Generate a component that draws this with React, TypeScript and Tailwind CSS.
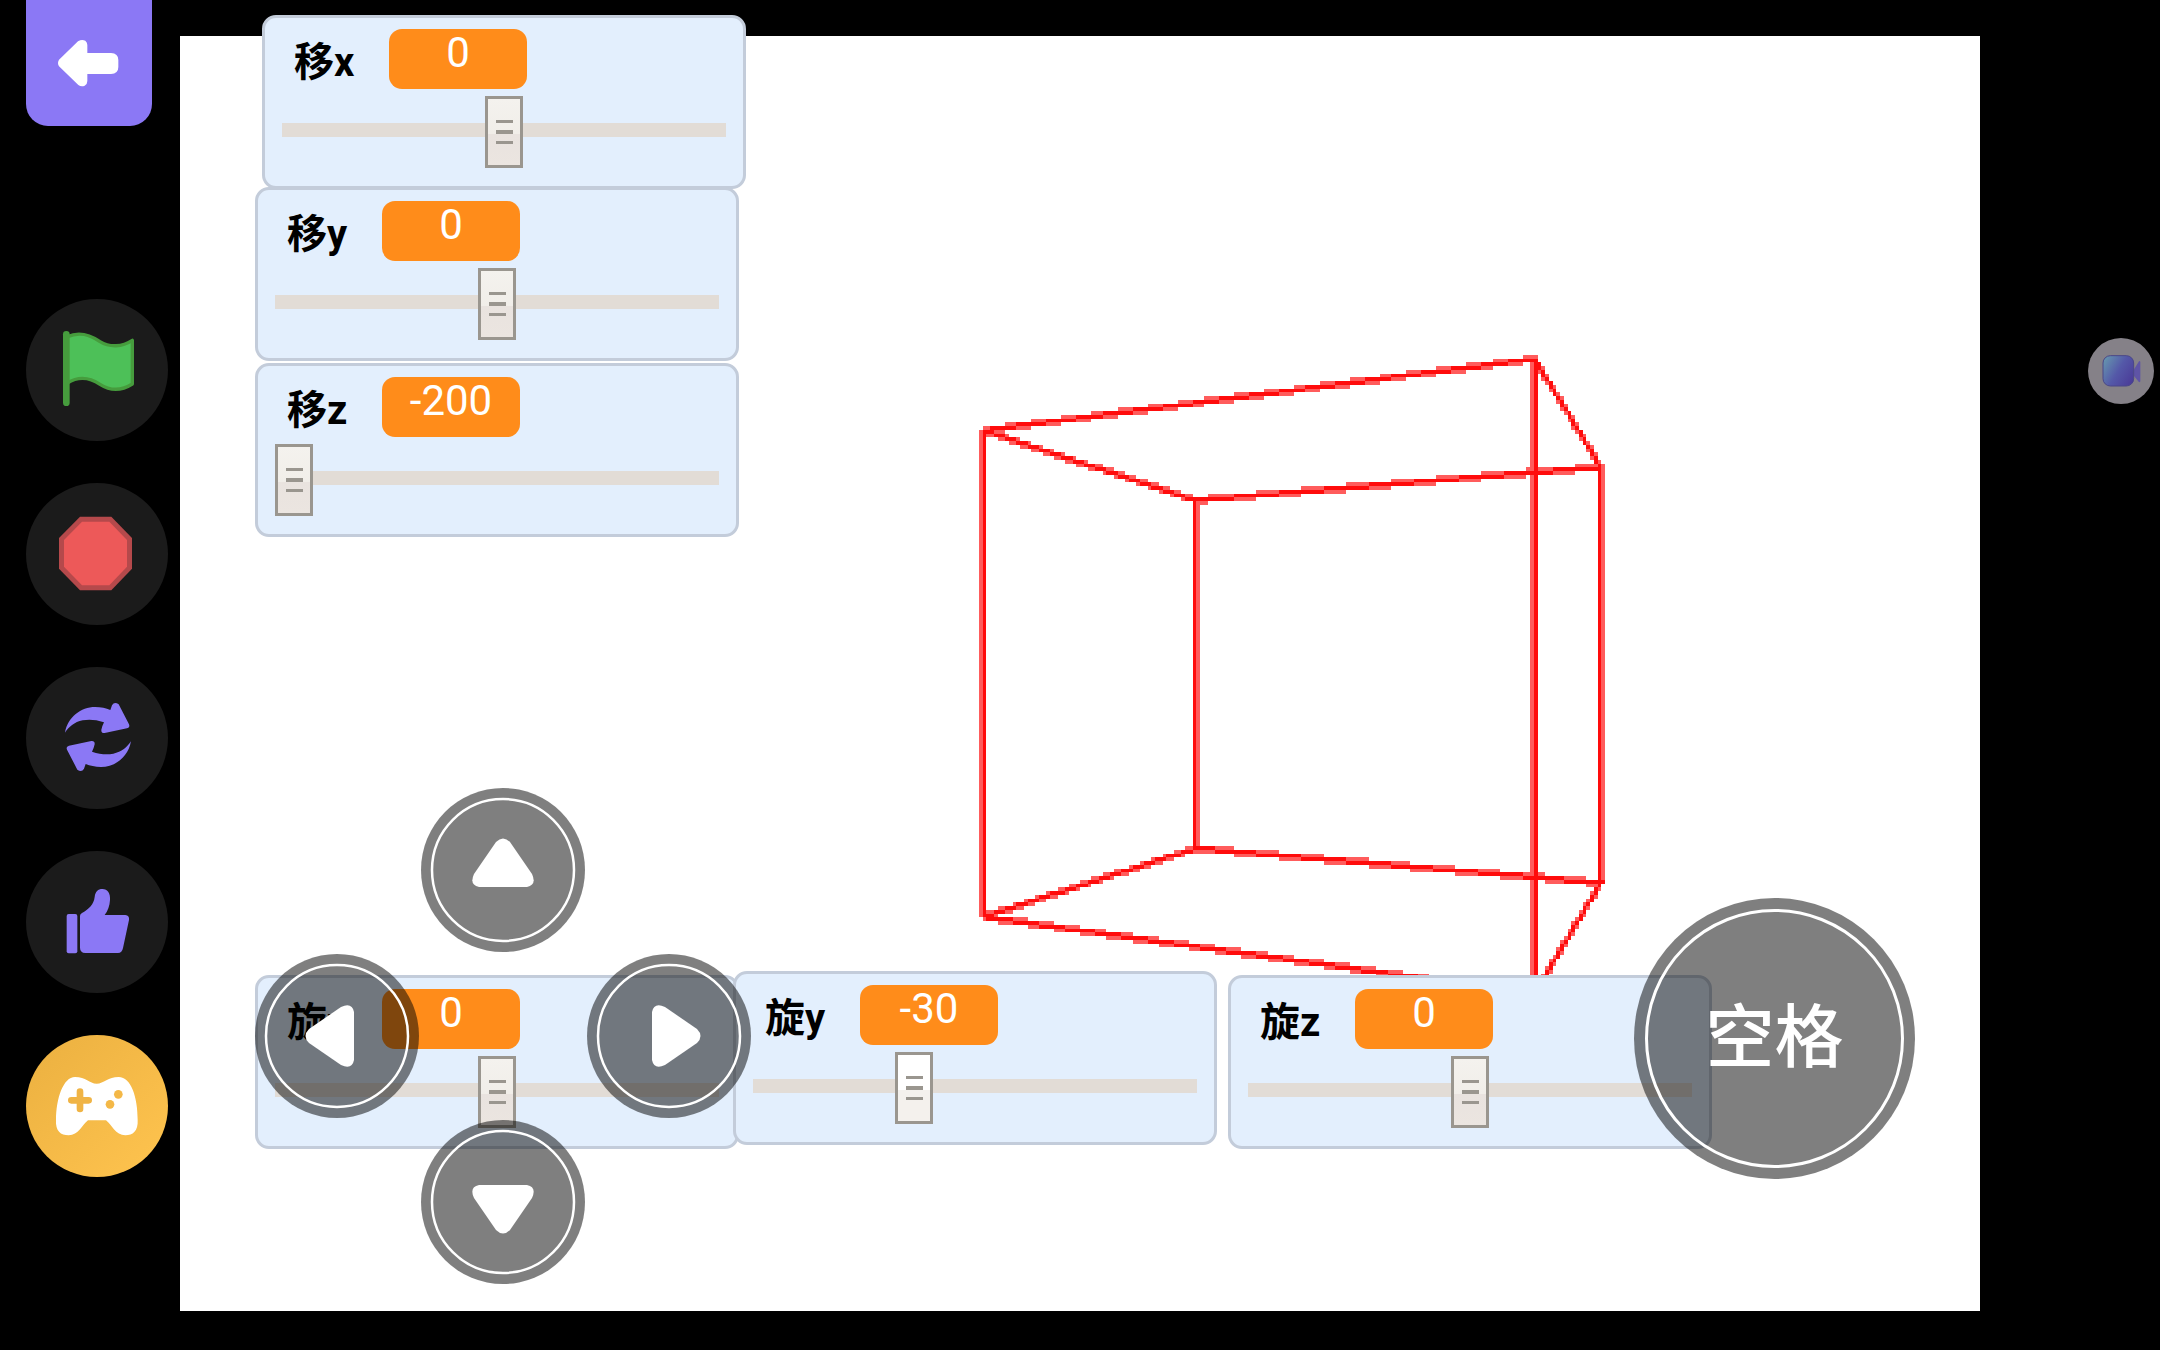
import React, { useState } from "react";

type Point = [number, number];

const STAGE_W = 480;
const STAGE_H = 340;

// projected cube corners, in stage units
const top: Point[] = [
  [214.15, 105.2],
  [361.15, 86.1],
  [378.85, 114.9],
  [270.85, 123.8],
];
const bottom: Point[] = [
  [214.15, 234.9],
  [361.15, 255.4],
  [378.85, 225.8],
  [270.85, 216.6],
];

const edges: [Point, Point][] = top.flatMap((p, i): [Point, Point][] => [
  [p, top[(i + 1) % 4]],
  [bottom[i], bottom[(i + 1) % 4]],
  [p, bottom[i]],
]);

// The pen layer has one cell per stage unit: every step along an edge fills
// the cell under it and half-fills the nearer neighbour
const plotEdges = () => {
  const solid = new Set<string>();
  const soft = new Set<string>();
  edges.forEach(([a, b]) => {
    const steep = Math.abs(b[1] - a[1]) > Math.abs(b[0] - a[0]);
    const main = steep ? 1 : 0;
    const cross = steep ? 0 : 1;
    const [from, to] = a[main] < b[main] ? [a, b] : [b, a];
    const slope = (to[cross] - from[cross]) / (to[main] - from[main]);
    for (let m = Math.floor(from[main]); m <= Math.floor(to[main]); m++) {
      const pos = from[cross] + slope * (m + 0.5 - from[main]);
      const cell = Math.floor(pos);
      const next = pos - cell < 0.5 ? cell - 1 : cell + 1;
      solid.add(steep ? `${cell} ${m}` : `${m} ${cell}`);
      soft.add(steep ? `${next} ${m}` : `${m} ${next}`);
    }
  });
  const toPath = (cells: string[]) => cells.map((c) => `M${c}h1v1h-1z`).join("");
  return {
    solid: toPath([...solid]),
    soft: toPath([...soft].filter((c) => !solid.has(c))),
  };
};

const cube = plotEdges();

const monitors = [
  { name: "移x", value: 0, min: -200, max: 200, place: "left-[82px] top-[-21px]", active: false },
  { name: "移y", value: 0, min: -200, max: 200, place: "left-[75px] top-[151px]", active: false },
  { name: "移z", value: -200, min: -200, max: 200, place: "left-[75px] top-[327px]", active: false },
  { name: "旋x", value: 0, min: -100, max: 100, place: "left-[75px] top-[939px]", active: false },
  { name: "旋y", value: -30, min: -100, max: 100, place: "left-[553px] top-[935px]", active: true },
  { name: "旋z", value: 0, min: -100, max: 100, place: "left-[1048px] top-[939px]", active: false },
];

const sliderClass =
  "block w-full h-[72px] appearance-none bg-transparent [&::-webkit-slider-runnable-track]:h-[14px] [&::-webkit-slider-runnable-track]:bg-[#e2dcd6] [&::-webkit-slider-thumb]:appearance-none [&::-webkit-slider-thumb]:w-[38px] [&::-webkit-slider-thumb]:h-[72px] [&::-webkit-slider-thumb]:mt-[-27px] [&::-webkit-slider-thumb]:border-[3px] [&::-webkit-slider-thumb]:border-[#9a968f]";
const thumbClass =
  "[&::-webkit-slider-thumb]:[background:linear-gradient(transparent_21px,#9a968f_21px,#9a968f_24px,transparent_24px,transparent_31px,#9a968f_31px,#9a968f_35px,transparent_35px,transparent_42px,#9a968f_42px,#9a968f_45px,transparent_45px)_center/17px_100%_no-repeat,linear-gradient(#f4f2ee,#f1eee9_53%,#e9e3df_53%,#ebe5e0)]";
const activeThumbClass =
  "[&::-webkit-slider-thumb]:[background:linear-gradient(transparent_21px,#9a968f_21px,#9a968f_24px,transparent_24px,transparent_31px,#9a968f_31px,#9a968f_35px,transparent_35px,transparent_42px,#9a968f_42px,#9a968f_45px,transparent_45px)_center/17px_100%_no-repeat,linear-gradient(#ffffff,#ffffff_53%,#f4f1ed_53%,#f4f1ed)]";

const Monitor = ({ monitor }: { monitor: (typeof monitors)[number] }) => {
  const [value, setValue] = useState(monitor.value);
  return (
    <div
      className={`absolute ${monitor.place} w-[484px] h-[174px] border-[3px] border-[#c3ccda] rounded-[14px] bg-[#e3effd] px-[17px] pt-[11px]`}
    >
      <div className="flex h-[60px] items-start">
        <label htmlFor={monitor.name} className="w-[107px] pl-3 text-[40px] leading-[68px] font-bold text-black">
          {monitor.name}
        </label>
        <output
          htmlFor={monitor.name}
          className="w-[138px] h-[60px] rounded-[13px] bg-[#ff8c1a] text-center text-[42px] leading-[48px] text-white"
        >
          {value}
        </output>
      </div>
      <div className="pt-[5px]">
        <input
          id={monitor.name}
          type="range"
          min={monitor.min}
          max={monitor.max}
          value={value}
          onChange={(e) => setValue(Number(e.target.value))}
          className={`${sliderClass} ${monitor.active ? activeThumbClass : thumbClass}`}
        />
      </div>
    </div>
  );
};

const ArrowKey = ({ label, turn, cell }: { label: string; turn: string; cell: string }) => (
  <button aria-label={label} className={`${cell} size-[164px] rounded-full bg-black/50`}>
    <svg viewBox="0 0 164 164" className={`size-full ${turn}`}>
      <circle cx="82" cy="82" r="71" fill="none" stroke="#fff" strokeWidth="2.5" />
      <path d="M75 54Q82 47 89 54L111 86Q116 97 106 99H58Q48 97 53 86Z" fill="#fff" />
    </svg>
  </button>
);

const tools = [
  {
    label: "运行",
    bg: "bg-[#1b1b1b]",
    icon: (
      <>
        <path
          d="M124 113C160 97 190 106 222 128C252 146 288 144 319 124V255C284 277 250 274 222 256C192 236 160 230 124 252Z"
          fill="#4dc058"
          stroke="#469c3d"
          strokeWidth="10"
          strokeLinejoin="round"
        />
        <rect x="111" y="96" width="20" height="225" rx="10" fill="#469c3d" />
      </>
    ),
  },
  {
    label: "停止",
    bg: "bg-[#1b1b1b]",
    icon: (
      <>
        <path d="M162 101H256L318 165V257L256 322H162L99 257V165Z" fill="#b5494b" />
        <path d="M168 116H250L303 171V251L250 307H168L114 251V171Z" fill="#ed5959" />
      </>
    ),
  },
  {
    label: "重新开始",
    bg: "bg-[#1b1b1b]",
    icon: (
      <g fill="#8b78f5">
        <path
          id="half"
          d="M117 197C125 150 165 120 207 120C225 120 240 124 253 129L258 115Q265 102 278 112L309 172Q313 181 303 184L236 198Q225 199 226 188Q228 178 234 166C210 158 190 157 170 160C145 165 128 180 117 197Z"
        />
        <use href="#half" transform="rotate(180 216 210)" />
      </g>
    ),
  },
  {
    label: "点赞",
    bg: "bg-[#1b1b1b]",
    icon: (
      <g fill="#8b78f5">
        <rect x="122" y="189" width="32" height="118" rx="6" />
        <path d="M162 195Q162 189 168 186C190 174 203 160 206 138C208 122 216 114 229 114C245 114 254 128 252 147C251 164 246 180 236 192H298Q311 193 309 207L291 291Q288 306 276 306H178Q162 305 162 290Z" />
      </g>
    ),
  },
  {
    label: "手柄",
    bg: "bg-linear-to-br from-[#ebb040] to-[#ffc44f]",
    icon: (
      <>
        <path
          d="M147 126C180 126 190 146 212 146C234 146 246 126 278 126C315 126 335 185 335 255C337 288 320 301 298 301C268 301 258 270 240 256H186C168 270 158 301 128 301C104 301 88 288 90 255C90 190 112 126 147 126Z"
          fill="#fff"
        />
        <path d="M162 170V222M136 196H188" stroke="#f0b445" strokeWidth="20" strokeLinecap="round" />
        <circle cx="277" cy="178" r="13" fill="#f4b847" />
        <circle cx="252" cy="208" r="13" fill="#f4b847" />
      </>
    ),
  },
];

const Sidebar = () => (
  <aside className="w-[180px] shrink-0 pl-[26px]">
    <button aria-label="返回" className="block size-[126px] rounded-b-[22px] bg-[#8b78f5]">
      <svg viewBox="0 0 378 378" className="size-full" fill="#fff">
        <path d="M99 179L156 124Q167 117 178 122Q184 127 184 135V159H255Q277 160 277 180V201Q277 221 255 222H184V243Q184 253 176 257Q166 261 157 255L99 199Q93 189 99 179Z" />
      </svg>
    </button>
    <div className="mt-[173px] flex flex-col gap-[42px]">
      {tools.map((tool) => (
        <button
          key={tool.label}
          aria-label={tool.label}
          className={`size-[142px] rounded-full overflow-hidden ${tool.bg}`}
        >
          <svg viewBox="0 0 426 426" className="size-full">
            {tool.icon}
          </svg>
        </button>
      ))}
    </div>
  </aside>
);

const Stage = () => (
  <section className="relative flex-1 self-start mt-9 bg-white">
    <svg viewBox={`0 0 ${STAGE_W} ${STAGE_H}`} className="block w-full" shapeRendering="crispEdges">
      <path d={cube.soft} fill="#ff5c5c" />
      <path d={cube.solid} fill="#ff0c0c" />
    </svg>

    {monitors.map((monitor) => (
      <Monitor key={monitor.name} monitor={monitor} />
    ))}

    <div className="absolute left-[75px] top-[752px] grid grid-cols-3 gap-[2px]">
      <ArrowKey label="上" turn="rotate-0" cell="col-start-2 row-start-1" />
      <ArrowKey label="左" turn="-rotate-90" cell="col-start-1 row-start-2" />
      <ArrowKey label="右" turn="rotate-90" cell="col-start-3 row-start-2" />
      <ArrowKey label="下" turn="rotate-180" cell="col-start-2 row-start-3" />
    </div>

    <button className="absolute right-[65px] top-[862px] size-[281px] rounded-full bg-black/50 p-[11px]">
      <span className="flex size-full items-center justify-center rounded-full border-[3px] border-white text-[69px] leading-[72px] font-medium text-white">
        空格
      </span>
    </button>
  </section>
);

const Recorder = () => (
  <aside className="w-[180px] shrink-0 flex items-start justify-end pt-[338px] pr-[6px]">
    <button aria-label="录制" className="size-[66px] rounded-full bg-[#858188]">
      <svg viewBox="0 0 198 198" className="size-full">
        <defs>
          <linearGradient id="lens" x1="0" y1="0.2" x2="1" y2="0.8">
            <stop offset="0" stopColor="#6593ae" />
            <stop offset="0.5" stopColor="#5458a8" />
            <stop offset="1" stopColor="#4b3c98" />
          </linearGradient>
        </defs>
        <path d="M138 94L153 70Q157 67 157 74V128Q157 135 152 131L138 114Z" fill="#5f54a6" />
        <rect x="45" y="53" width="92" height="91" rx="22" fill="url(#lens)" stroke="#4a4788" strokeWidth="3" />
      </svg>
    </button>
  </aside>
);

const App = () => {
  return (
    <main className="flex min-h-screen overflow-hidden bg-black font-[Roboto,'Noto_Sans_CJK_SC',sans-serif]">
      <Sidebar />
      <Stage />
      <Recorder />
    </main>
  );
};

export default App;
